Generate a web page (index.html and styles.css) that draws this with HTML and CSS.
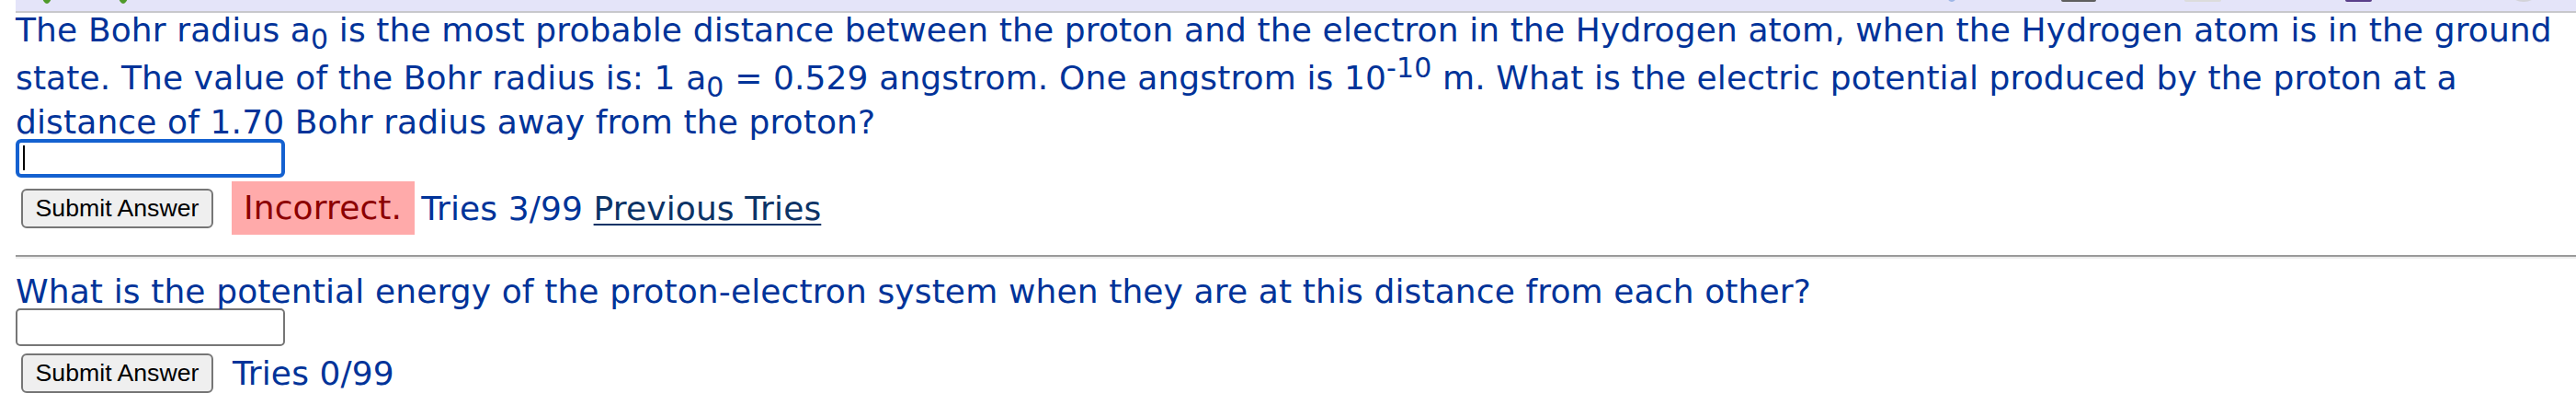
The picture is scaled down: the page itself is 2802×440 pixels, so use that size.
FILE: index.html
```html
<!DOCTYPE html>
<html lang="en">
<head>
<meta charset="utf-8">
<title>Bohr radius problem</title>
<link rel="stylesheet" href="styles.css">
</head>
<body>
<div class="page">
  <div class="band">
    <span class="ic ic-green ic-g1"></span>
    <span class="ic ic-green ic-g2"></span>
    <span class="ic ic-blue"></span>
    <span class="ic ic-dark"></span>
    <span class="ic ic-light"></span>
    <span class="ic ic-purple"></span>
    <span class="ic ic-light2"></span>
  </div>

  <section class="q q1">
    <p class="qtext">The Bohr radius a<sub>0</sub> is the most probable distance between the proton and the electron in the Hydrogen atom, when the Hydrogen atom is in the ground state. The value of the Bohr radius is: 1 a<sub>0</sub> = 0.529 angstrom. One angstrom is 10<sup>-10</sup> m. What is the electric potential produced by the proton at a distance of 1.70 Bohr radius away from the proton?</p>
    <div class="field focused"><span class="caret"></span></div>
    <div class="row row1">
      <button class="btn" type="button">Submit Answer</button>
      <span class="incorrect">Incorrect.</span>
      <span class="tries">Tries 3/99 <a class="prev" href="#">Previous Tries</a></span>
    </div>
  </section>

  <hr class="sep">

  <section class="q q2">
    <p class="qtext">What is the potential energy of the proton-electron system when they are at this distance from each other?</p>
    <div class="field"></div>
    <div class="row row2">
      <button class="btn" type="button">Submit Answer</button>
      <span class="tries tries2">Tries 0/99</span>
    </div>
  </section>
</div>
</body>
</html>
```

FILE: styles.css
```css
html, body {
  margin: 0;
  padding: 0;
  background: #ffffff;
}

.page {
  padding-left: 17px;
  font-family: "DejaVu Sans", Verdana, sans-serif;
  font-size: 36px;
  color: #003399;
  letter-spacing: 0.12px;
}

.band {
  position: relative;
  height: 12px;
  background: #e4e4f9;
  border-bottom: 2px solid #c8c8cc;
  overflow: hidden;
}

.ic {
  position: absolute;
  top: -14px;
  height: 18px;
  border-radius: 50%;
}
.ic-green { background: #4f9a2a; width: 10px; }
.ic-g1 { left: 29px; }
.ic-g2 { left: 112px; }
.ic-blue { left: 2100px; width: 12px; background: #9fb7e6; top: -16px; }
.ic-dark { left: 2225px; width: 38px; background: #5f5f5f; border-radius: 2px; top: -16px; }
.ic-light { left: 2359px; width: 40px; background: #dcdcdc; border-radius: 2px; top: -16px; }
.ic-purple { left: 2534px; width: 29px; background: #5a3f8a; border-radius: 2px; top: -16px; }
.ic-light2 { left: 2714px; width: 28px; background: #d3d3d8; top: -16px; }

.qtext {
  margin: 0;
  line-height: 45px;
}
.q1 .qtext { margin-top: -4px; }
.q2 .qtext { margin-top: 13px; }

.qtext sub, .qtext sup {
  font-size: 30px;
  line-height: 31px;
}

.field {
  box-sizing: border-box;
  width: 293px;
  height: 41px;
  margin-top: -4px;
  border: 2px solid #767676;
  border-radius: 5px;
  background: #ffffff;
}
.field.focused {
  height: 42px;
  border: 4px solid #1461d0;
  border-radius: 6px;
  padding: 3px 0 0 4px;
}
.caret {
  display: block;
  width: 2px;
  height: 27px;
  background: #000000;
}

.row {
  display: flex;
  align-items: center;
}
.row1 { margin-top: 4px; }
.row2 { margin-top: 7px; }

.btn {
  box-sizing: border-box;
  width: 209px;
  height: 43px;
  margin: 0 0 0 6px;
  padding: 0;
  border: 2px solid #767676;
  border-radius: 6px;
  background: #efefef;
  color: #000000;
  font-family: "Liberation Sans", Arial, sans-serif;
  font-size: 26.67px;
  letter-spacing: 0;
}

.incorrect {
  margin-left: 20px;
  padding: 8px 14px 8px 13px;
  line-height: 42px;
  background: #ffaaaa;
  color: #8c0000;
}

.tries {
  margin-left: 7px;
  line-height: 45px;
}
.tries2 { margin-left: 21px; }

.prev {
  color: #0b3366;
  text-decoration: underline;
  text-decoration-thickness: 2px;
  text-underline-offset: 4px;
}

.sep {
  margin: 22px 0 0 0;
  height: 0;
  border: 0;
  border-top: 2px solid #9a9a9a;
  border-bottom: 2px solid #ececec;
}
```
